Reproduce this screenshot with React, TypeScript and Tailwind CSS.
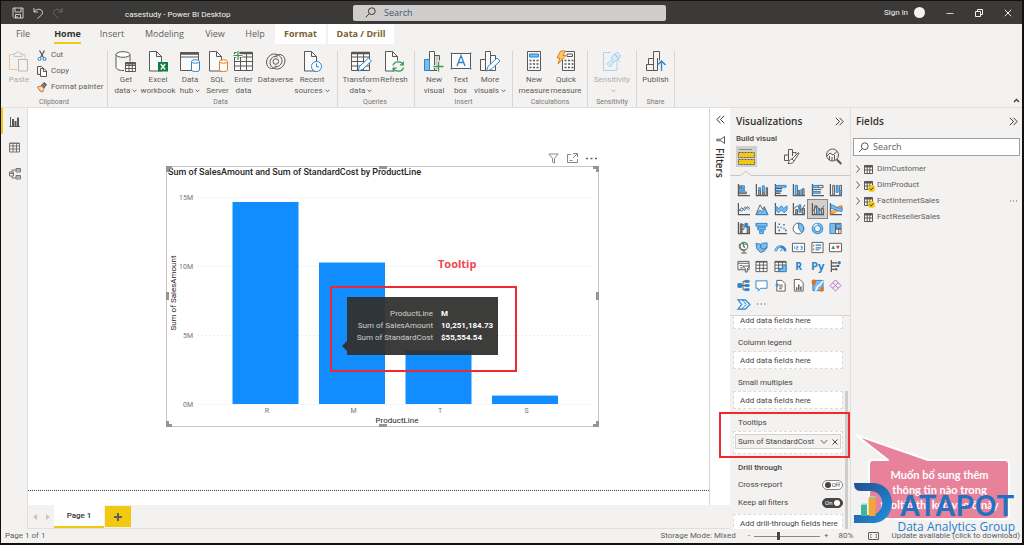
import type { ReactNode } from 'react'

const DARK = '#5a5856'
const BLUE = '#2b84cc'
const SKY = '#7dbdec'

function Svg({ w, h, size, children }: { w: number; h: number; size?: number; children: ReactNode }) {
  return (
    <svg
      width={size ?? w}
      height={size ? (size * h) / w : h}
      viewBox={`0 0 ${w} ${h}`}
      fill="none"
      stroke={DARK}
      strokeWidth="1"
      className="shrink-0 overflow-visible"
      aria-hidden="true"
    >
      {children}
    </svg>
  )
}

/* ---------- shared glyphs ---------- */

function SearchGlyph({ color = DARK }: { color?: string }) {
  return (
    <svg width="11" height="11" viewBox="0 0 11 11" fill="none" stroke={color} strokeWidth="1" aria-hidden="true">
      <circle cx="6.8" cy="4.2" r="3.4" />
      <path d="M4.4 6.6 .8 10.2" />
    </svg>
  )
}

function DoubleChevron({ left = false }: { left?: boolean }) {
  return (
    <svg width="9" height="9" viewBox="0 0 9 9" fill="none" stroke="#3b3a39" strokeWidth="1" aria-hidden="true">
      <path d={left ? 'M4.5.8.8 4.5l3.7 3.7M8.2.8 4.5 4.5l3.7 3.7' : 'm.8.8 3.7 3.7L.8 8.2M4.5.8l3.7 3.7-3.7 3.7'} />
    </svg>
  )
}

function Caret() {
  return (
    <svg width="5" height="4" viewBox="0 0 5 4" fill="none" stroke="currentColor" className="ml-0.5 inline-block" aria-hidden="true">
      <path d="m.6.8 1.900 1.900L4.400.8" />
    </svg>
  )
}

/* ---------- ribbon icons, 22 x 21 ---------- */

const page = 'M3.5 .5h7l5 5v14.500h-12zM10.500 .5v5h5'
const grid = 'M1.500 1.500h18v18h-18zM1.500 6h18M1.500 10.500h18M1.500 15h18M7.500 2v17.500M13.500 2v17.500'

const ribbonIcons: Record<string, ReactNode> = {
  paste: (
    <g stroke="#f0c48f">
      <path d="M5.500 3.500h-4v15h8M13.500 3.500h3.500v4" />
      <path d="M6 5.500v-3h2c0-2.500 4-2.500 4 0h2v3z" stroke="#c8c6c4" />
      <path d="M10.500 8.500h9v11.500h-9z" stroke="#b9b7b5" fill="#f3f2f1" />
    </g>
  ),
  getData: (
    <>
      <path d="M1 3.500v13c0 1.700 3 3 7 3h1M15 3.500v7" fill="#fafafa" />
      <ellipse cx="8" cy="3.500" rx="7" ry="2.800" fill="#fff" />
      <path d="M10.500 11.500h10v9h-10zM10.500 14.500h10M10.500 17.500h10M14 12v8.500M17.300 12v8.500" fill="#fff" />
      <path d="M10.500 12.500h10" strokeWidth="2" />
    </>
  ),
  excel: (
    <>
      <path d={page} fill="#fafafa" transform="translate(-1 0)" />
      <path d="M11 11h10v9.500h-10z" fill="#107c41" stroke="none" />
      <path d="m13.800 13 4.400 5.500m0-5.500-4.400 5.500" stroke="#fff" strokeWidth="1.300" />
    </>
  ),
  hub: (
    <>
      <path d="M1.500 1.500h18v18h-18z" fill="#fafafa" />
      <path d="M1.500 2.500h18" strokeWidth="2.500" />
      <path d="M1.500 6h18" />
      <path d="M12.500 10.500v8.500c0 2 8 2 8 0v-8.500" fill="#fff" stroke={BLUE} />
      <ellipse cx="16.500" cy="10.500" rx="4" ry="1.700" fill="#fff" stroke={BLUE} />
    </>
  ),
  sql: (
    <>
      <path d={page} fill="#fafafa" transform="translate(-1 0)" />
      <path d="M12.500 10.500v8.500c0 2 8 2 8 0v-8.500" fill="#fff" stroke="#e07a1c" />
      <ellipse cx="16.500" cy="10.500" rx="4" ry="1.700" fill="#fff" stroke="#e07a1c" />
    </>
  ),
  enter: (
    <>
      <path d={grid} fill="#fafafa" />
      <path d="M6 2h13.500" strokeWidth="2.500" />
      <path d="M5 0v9M0 4.500h9.500" stroke="#f3f2f1" strokeWidth="3" />
      <path d="M5 0v9M.5 4.500h9" stroke="#3a9a54" strokeWidth="1.200" />
    </>
  ),
  dataverse: (
    <>
      <path d="M13 4C8 1 2 5 1.500 11c0 4 2 6 5 6.500 2.500 0 4-1 5.500-2.500" />
      <path d="M8.500 17c5 3 11-1 11.500-7 0-4-2-6-5-6.500-2.500 0-4 1-5.500 2.500" />
      <path d="M13 4c4 2 5 6 3 9-2 3-5 3-6.500 2M8.500 17C5 15 4 11 6 8c2-3 5-3 6.500-2" />
      <circle cx="10.800" cy="10.500" r="2.800" />
    </>
  ),
  recent: (
    <>
      <path d={page} fill="#fafafa" />
      <circle cx="15.500" cy="15.500" r="5" fill="#fff" stroke={BLUE} />
      <path d="M15.500 12.500v3.300h2.500" stroke={BLUE} />
    </>
  ),
  transform: (
    <>
      <path d={grid} fill="#fafafa" />
      <path d="M1.500 2h18" strokeWidth="2.500" />
      <path d="m8 20 1.500-4.500L18.500 7l3 3-9 8.500z" fill="#fff" stroke={BLUE} />
    </>
  ),
  refresh: (
    <>
      <path d={page} fill="#fafafa" transform="translate(-1 0)" />
      <circle cx="15" cy="15.500" r="6" fill="#f3f2f1" stroke="none" />
      <path d="M10 14.500c1-4.500 8-5 10-1m.3-3v3.300h-3.300M20.500 16.500c-1 4.500-8 5-10 1m-.3 3v-3.300h3.300" stroke="#3a9a54" strokeWidth="1.200" />
    </>
  ),
  newVisual: (
    <>
      <path d="M6.500 .5h5v19h-5zM11.500 4.500h5v15h-5z" fill="#fafafa" />
      <path d="M14 5v14" stroke="#c8c6c4" strokeWidth="3" />
      <path d="M1.500 8.500h5v11h-5z" fill={SKY} stroke={BLUE} />
      <path d="M15.500 9.500v11M9.500 15.500h11" stroke="#f3f2f1" strokeWidth="3" />
      <path d="M15.500 10.500v10M10.500 15.500h10" stroke="#3a9a54" strokeWidth="1.400" />
    </>
  ),
  textBox: (
    <>
      <path d="M1.500 2.500h19v15h-19z" fill="#fafafa" />
      <path d="M1 2h1v1H1zM20 2h1v1h-1zM1 17h1v1H1zM20 17h1v1h-1z" fill={BLUE} stroke={BLUE} />
      <path d="m7 15 4-10.500L15 15M8.300 11.500h5.400" stroke={BLUE} strokeWidth="1.300" />
    </>
  ),
  moreVisuals: (
    <>
      <path d="M1.500 8.500h5v11h-5zM6.500 .5h5v19h-5zM11.500 4.500h5v15h-5z" fill="#fafafa" />
      <path d="m7.500 20 1.500-4.500L18 7l3 3-9 8.500z" fill="#fff" stroke={BLUE} />
    </>
  ),
  measure: (
    <>
      <path d="M4.500 .5h13v19h-13z" fill="#fafafa" />
      <path d="M6.500 3h9v3h-9z" fill={SKY} stroke={BLUE} />
      <path d="M6.500 9.500h9M6.500 13h9M6.500 16.500h9" strokeWidth="1.700" strokeDasharray="2 1.500" />
    </>
  ),
  quick: (
    <>
      <path d="M7.500 .5h12v19h-12z" fill="#fafafa" />
      <path d="M12 3h5.500v2.500H12z" strokeWidth="1" />
      <path d="M9.500 9.500h9M9.500 13h9M9.500 16.500h9" strokeWidth="1.700" strokeDasharray="2 1.500" />
      <path d="M5.500 0h5L8 4.500h3L3 13l2-6H2z" fill="#f7c873" stroke="#e8791c" />
    </>
  ),
  sensitivity: (
    <g stroke="#a9d3ef">
      <path d="M10 1.500H2.500v18h13.500v-8" />
      <path d="m6 13 3 3 4-5-3-2zM10 7l3-4 5 5-3 3zM14 3l2-2 4 4-2 2zM15 8l4 3" fill="#d8ebf7" />
    </g>
  ),
  publish: (
    <>
      <path d="M1.500 13.500h7v6h-7z" />
      <path d="M3.500 13V7.500h5v12M8.500 7.500v-7h6v9M8.500 19.500h4V7" />
      <path d="M16.500 20V10M12.500 14l4-4 4 4" stroke={BLUE} strokeWidth="1.300" />
    </>
  ),
}

type RibbonItem = { icon: string; lines: string[]; width: string; caret?: boolean; disabled?: boolean }
type RibbonGroup = { label: string; pad: string; items: RibbonItem[] }

const RIBBON: RibbonGroup[] = [
  {
    label: 'Data',
    pad: 'pl-0.5 pr-1.5',
    items: [
      { icon: 'getData', lines: ['Get', 'data'], width: 'w-8', caret: true },
      { icon: 'excel', lines: ['Excel', 'workbook'], width: 'w-8' },
      { icon: 'hub', lines: ['Data', 'hub'], width: 'w-8', caret: true },
      { icon: 'sql', lines: ['SQL', 'Server'], width: 'w-[23px]' },
      { icon: 'enter', lines: ['Enter', 'data'], width: 'w-[29px]' },
      { icon: 'dataverse', lines: ['Dataverse'], width: 'w-[35px]' },
      { icon: 'recent', lines: ['Recent', 'sources'], width: 'w-[38px]', caret: true },
    ],
  },
  {
    label: 'Queries',
    pad: 'pl-1 pr-1.5',
    items: [
      { icon: 'transform', lines: ['Transform', 'data'], width: 'w-[38px]', caret: true },
      { icon: 'refresh', lines: ['Refresh'], width: 'w-7' },
    ],
  },
  {
    label: 'Insert',
    pad: 'px-1.5',
    items: [
      { icon: 'newVisual', lines: ['New', 'visual'], width: 'w-[26px]' },
      { icon: 'textBox', lines: ['Text', 'box'], width: 'w-[27px]' },
      { icon: 'moreVisuals', lines: ['More', 'visuals'], width: 'w-8', caret: true },
    ],
  },
  {
    label: 'Calculations',
    pad: 'px-[5px]',
    items: [
      { icon: 'measure', lines: ['New', 'measure'], width: 'w-8' },
      { icon: 'quick', lines: ['Quick', 'measure'], width: 'w-8' },
    ],
  },
  {
    label: 'Sensitivity',
    pad: 'px-1',
    items: [{ icon: 'sensitivity', lines: ['Sensitivity', ''], width: 'w-10', caret: true, disabled: true }],
  },
  { label: 'Share', pad: 'px-0.5', items: [{ icon: 'publish', lines: ['Publish'], width: 'w-[33px]' }] },
]

/* ---------- visual gallery icons, 14 x 14 ---------- */

const axes = <path d="M1.500 0v12.500H14" strokeWidth="1.300" />

const VISUALS: { name: string; icon: ReactNode }[] = [
  { name: 'Stacked bar chart', icon: <>{axes}<path d="M2 2h3v2.500H2zM2 8.500h8v2H2z" fill="#aaa" /><path d="M5 2h3v2.500H5zM2 5.300h6v2H2z" fill={SKY} stroke={BLUE} /></> },
  { name: 'Stacked column chart', icon: <>{axes}<path d="M4 7h2v5H4zM8 9h2v3H8zM12 4h1.500v8H12z" fill="#aaa" /><path d="M4 4h2v3H4zM8 2h2v7H8z" fill={SKY} stroke={BLUE} /></> },
  { name: 'Clustered bar chart', icon: <>{axes}<path d="M2 1.500h11v2H2zM2 7h6v1H2z" fill={SKY} stroke={BLUE} /><path d="M2 5h7M2 10h5" strokeWidth="1.500" /></> },
  { name: 'Clustered column chart', icon: <>{axes}<path d="M3.500 1.500H6V12H3.500z" fill={SKY} stroke={BLUE} /><path d="M6.500 7H8v5H6.500zM11.500 5H13v7h-1.500z" fill="#ddd" /><path d="M9.500 6h1v6h-1z" stroke={BLUE} /></> },
  { name: '100% stacked bar chart', icon: <>{axes}<path d="M2 1.500h6V4H2zM2 8h8v2H2z" fill={SKY} stroke={BLUE} /><path d="M8 1.500h5V4H8M2 6h9" /></> },
  { name: '100% stacked column chart', icon: <>{axes}<path d="M4 1.500h2V12H4zM11.500 1.500h2V12h-2z" fill="#ddd" /><path d="M7.800 1.500h2V9h-2zM11.500 7h2v3h-2z" fill={SKY} stroke={BLUE} /></> },

  { name: 'Line chart', icon: <>{axes}<path d="m2 9 3-4 3 3 3-4 3 2" /><path d="m2 7 3 2 4-5 4 4" stroke={BLUE} /></> },
  { name: 'Area chart', icon: <><path d="M1 12.500 5.500 2 8 7l2-3 4 8.500z" fill="#fff" /><path d="m1 12.500 4-5 3 2 2-4 4 7z" fill={SKY} stroke={BLUE} /></> },
  { name: 'Stacked area chart', icon: <>{axes}<path d="M2 3.500 5 6l3-3 2.500 3L14 3v4.500l-3 3L8 7.500l-3 3L2 8z" fill={SKY} stroke={BLUE} /></> },
  { name: 'Line and stacked column', icon: <>{axes}<path d="M4 7h2v5H4zM11 6h2.500v6H11z" fill="#aaa" /><path d="M7.500 2h2v8h-2z" fill={SKY} stroke={BLUE} /><path d="m2 6 4-3 4 5 4-6" /></> },
  { name: 'Line and clustered column', icon: <>{axes}<path d="M4 3h2v9H4z" fill="#fff" /><path d="M7.500 6h2v6h-2z" fill={SKY} stroke={BLUE} /><path d="M11.500 6h2v6h-2zM2 9l4-6 4 5 4-5" /></> },
  { name: 'Ribbon chart', icon: <>{axes}<path d="M2 9c5 0 5-6 12-6v4C9 7 8 11 2 12z" fill="#f2b56b" stroke="#e0811f" /><path d="M2 2c5 0 6 5 12 3v4C8 9 7 6 2 6z" fill={SKY} stroke={BLUE} /></> },

  { name: 'Waterfall chart', icon: <>{axes}<path d="M3.500 2h2v10h-2zM11 5h2.500v7H11z" fill="#888" /><path d="M5.500 3h2v5h-2z" fill="#fff" /><path d="M8.500 1.500h3v4h-3z" fill={BLUE} stroke={BLUE} /></> },
  { name: 'Funnel', icon: <path d="M1 1.500h12v3H1zM3 5.500h8v3H3zM5 9.500h4v3H5z" fill={SKY} stroke={BLUE} /> },
  { name: 'Scatter chart', icon: <>{axes}<path d="M5 2.500h1.500M5 9h1.500M10 3h1.500M12 9h1.500" strokeWidth="1.700" /><path d="M7 6h1.500M10 7h1.500M3.500 5.500H5" stroke={BLUE} strokeWidth="1.700" /></> },
  { name: 'Pie chart', icon: <><circle cx="7" cy="7" r="5.800" fill="#fff" /><path d="M7 1.200V7l3.600 4.500A5.800 5.800 0 0 0 7 1.200" fill={SKY} stroke={BLUE} /></> },
  { name: 'Donut chart', icon: <><circle cx="7" cy="7" r="4.500" stroke={BLUE} strokeWidth="3.500" /><circle cx="7" cy="7" r="4.500" stroke={SKY} strokeWidth="1.800" /><path d="M7 2.500A4.500 4.500 0 0 0 3 5" stroke="#eee" strokeWidth="1.800" /></> },
  { name: 'Treemap', icon: <><path d="M1 1.500h6v11H1z" fill={SKY} stroke={BLUE} /><path d="M7 1.500h6v6H7zM7 7.500h6v5H7zM10.500 7.500v5" fill="#fff" /><path d="M8 2.500h4v4H8z" stroke={BLUE} fill={SKY} /></> },

  { name: 'Map', icon: <><circle cx="7.500" cy="5.500" r="4.200" fill="#fff" /><path d="M5 3c2-1 3 0 2 1.500s2 1.500 1 3M9 3l1.500 1" stroke="#2f9e58" strokeWidth="1.700" /><path d="M3 3c-2 4 1 8 6 7.500M7.500 10.500v2.500M4.500 13h6" /></> },
  { name: 'Filled map', icon: <><path d="m1 2.500 5 1 2-1 5-.5v5l-3 4-4 1.500-4-4z" fill={SKY} stroke={BLUE} /><path d="M6 4v3l3 2 4-2" stroke="#666" /></> },
  { name: 'Gauge', icon: <><path d="M2 11a5 5 0 0 1 10 0" stroke={BLUE} strokeWidth="3" /><path d="M2 11a5 5 0 0 1 5-5" stroke={SKY} strokeWidth="2" /><path d="m7 11 2-3" /></> },
  { name: 'Card', icon: <><path d="M.5 2.500h13v9H.5z" fill="#fff" /><path d="M3 5v4M5 5.500h1.500V7H5v2h2M9 5.500h2V9H9M9.500 7H11" stroke={BLUE} strokeWidth=".8" /></> },
  { name: 'Multi-row card', icon: <><path d="M1 1.500h12v11H1z" fill="#fff" /><path d="M3 4v2M3 8v2M5 9.500h4" /><path d="M5 4.500h6M5 7.500h6" stroke={BLUE} strokeWidth="1.300" /></> },
  { name: 'KPI', icon: <><path d="M.5 2.500h13v9H.5z" fill="#fff" /><path d="m2.500 8.500 2-4 2 4z" fill="#2f9e58" stroke="none" /><path d="m7.500 5 2 4 2-4z" fill="#d83b3b" stroke="none" /></> },

  { name: 'Slicer', icon: <><path d="M1 1.500h12v9H1z" fill="#fff" /><path d="M1 3.500h12M3 6h3M3 8.500h4" /><path d="M6.500 6.500h7l-2.500 3v3.500h-2V9.500z" fill="#fff" /></> },
  { name: 'Table', icon: <><path d="M1 1.500h12v11H1zM1 5.500h12M1 9h12M5 2v10.500M9 2v10.500" fill="#fff" /><path d="M1 2h12" strokeWidth="1.500" /></> },
  { name: 'Matrix', icon: <><path d="M1 1.500h12v11H1zM1 5.500h12M1 9h12M5 2v10.500M9 2v10.500" fill="#fff" /><path d="M9.500 5.500H13v7H6V9.500h3.500z" fill={SKY} stroke={BLUE} /><path d="M1 2h12" strokeWidth="1.800" /></> },
  { name: 'R script visual', icon: <text x="3.500" y="11" fontSize="11" fontWeight="700" fill={BLUE} stroke="none">R</text> },
  { name: 'Python visual', icon: <text x="0" y="11" fontSize="12" fontWeight="700" fill={BLUE} stroke="none">Py</text> },
  { name: 'Key influencers', icon: <><path d="M2.500 0v13M2.500 3H9M2.500 6.500H8M2.500 10H6" strokeWidth="1.300" /><circle cx="11" cy="3" r="1.800" fill={BLUE} stroke="none" /><path d="M8 6.500h3M6 10h3" strokeWidth="2" /></> },

  { name: 'Decomposition tree', icon: <><path d="M1 5h4v4H1z" fill={BLUE} stroke={BLUE} /><path d="M8.500 1.500H13v2H8.500zM8.500 6H13v2H8.500zM8.500 10.500H13v2H8.500z" fill={BLUE} stroke={BLUE} /><path d="M5 7h3.500M8.500 2.500h-2v9h2" /></> },
  { name: 'Q&A', icon: <path d="M1 2h12v8H6l-2.500 3v-3H1z" fill="#fff" stroke={BLUE} /> },
  { name: 'Narrative', icon: <><path d="M3 1.500h5.500L12 5v8H3z" fill="#fff" /><path d="M5.500 6.500h4M5.500 8.500h4M5.500 10.500h3" /><path d="M3.500 4.500v4M1.500 6.500h4" stroke={BLUE} /></> },
  { name: 'Paginated report', icon: <><path d="M2.500 .5h6L12 4v9H2.500z" fill="#fff" /><path d="M5 12V9M7.300 12V6M9.500 12V8" strokeWidth="1.500" /></> },
  { name: 'ArcGIS map', icon: <><path d="M2 1.500h11v11H2z" fill={SKY} stroke={BLUE} /><path d="m5 13 2-5 3-2 3-4" stroke="#fff" strokeWidth="1.500" /><path d="M1 3a2 2 0 0 1 4 0c0 2-2 4-2 4S1 5 1 3zM11 9h2v4h-3z" fill="#e0711f" stroke="#e0711f" /></> },
  { name: 'Power Apps', icon: <g stroke="#b06fb8"><path d="m7 1 6 6-6 6-6-6z" fill="#f6ebf7" /><path d="m4 4 6 6M10 4l-6 6" /></g> },

  { name: 'Power Automate', icon: <><path d="M1 2h8l5 5-5 5H1l4-5z" fill="#e3f1fb" stroke={BLUE} strokeWidth="1.200" /><path d="m6 2 4 5-5 5" stroke={BLUE} /></> },
  { name: 'More visuals', icon: <path d="M2 6.500h1.500M6 6.500h1.500M10 6.500h1.500" stroke="#666" strokeWidth="1.200" /> },
]

/* ---------- title bar and ribbon ---------- */

function TitleBar() {
  return (
    <header className="grid h-[23px] shrink-0 grid-cols-[352px_minmax(0,1fr)_356px] items-center bg-[#3b3a39] text-[8px] text-[#f3f2f1]">
      <div className="flex items-center gap-2 pl-[11px]">
        <button aria-label="Save">
          <svg width="12" height="12" viewBox="0 0 12 12" fill="none" stroke="#d2d0ce" aria-hidden="true">
            <path d="M1 1h10v10H2.500L1 9.500zM3 1v4h6V1M3.500 11V7.500h5V11M5 9v2" />
          </svg>
        </button>
        <button aria-label="Undo">
          <svg width="12" height="12" viewBox="0 0 12 12" fill="none" stroke="#d2d0ce" aria-hidden="true">
            <path d="M2 1v4h4M2 5c2-3.500 8-4 8.500.5C10.500 8 8 9 5.500 11.500" />
          </svg>
        </button>
        <button aria-label="Redo">
          <svg width="12" height="12" viewBox="0 0 12 12" fill="none" stroke="#6b6967" aria-hidden="true">
            <path d="M10 1v4H6M10 5C8 1.500 2 1 1.500 5.500 1.500 8 4 9 6.500 11.500" />
          </svg>
        </button>
        <span className="ml-[53px] pt-1 whitespace-nowrap">casestudy - Power BI Desktop</span>
      </div>
      <label className="flex h-4 items-center gap-2 rounded-xs bg-[#cfcdcb] px-3">
        <SearchGlyph color="#3b3a39" />
        <input aria-label="Search" placeholder="Search" className="min-w-0 flex-1 bg-transparent font-['Open_Sans',sans-serif] text-[9px] outline-none placeholder:text-[#40587c]" />
      </label>
      <div className="flex items-center justify-end pr-[10px]">
        <button className="whitespace-nowrap">Sign in</button>
        <span className="ml-1.5 size-[11px] rounded-full bg-[#f3f2f1]" />
        <button aria-label="Minimize" className="ml-[21px]">
          <svg width="8" height="8" viewBox="0 0 8 8" stroke="#d2d0ce" aria-hidden="true"><path d="M.5 4.500h7" /></svg>
        </button>
        <button aria-label="Restore" className="ml-[21px]">
          <svg width="8" height="8" viewBox="0 0 8 8" fill="none" stroke="#f3f2f1" aria-hidden="true">
            <path d="M.5 2.500h5v5h-5zM2.500 2V.5h5v5H6" />
          </svg>
        </button>
        <button aria-label="Close" className="ml-[21px]">
          <svg width="8" height="8" viewBox="0 0 8 8" stroke="#f3f2f1" aria-hidden="true"><path d="m.8.8 6.400 6.400M7.200.8.8 7.200" /></svg>
        </button>
      </div>
    </header>
  )
}

function MenuTabs() {
  const tabs = [
    { label: 'File', width: 'w-11' },
    { label: 'Home', width: 'w-[45px]' },
    { label: 'Insert', width: 'w-11' },
    { label: 'Modeling', width: 'w-[61px]' },
    { label: 'View', width: 'w-10' },
    { label: 'Help', width: 'w-10' },
  ]
  return (
    <nav className="flex h-5 shrink-0 font-['Open_Sans',sans-serif] text-[9px] text-[#605e5c]">
      {tabs.map((tab) => (
        <button key={tab.label} className={`${tab.width} flex justify-center`}>
          <span
            className={
              tab.label === 'Home'
                ? 'h-5 border-b-2 border-[#f2c811] leading-[20px] font-bold text-[#323130]'
                : 'leading-[20px]'
            }
          >
            {tab.label}
          </span>
        </button>
      ))}
      <button className="w-[51px] bg-white font-bold text-[#7a6230]">Format</button>
      <button className="ml-0.5 w-[66px] bg-white font-bold whitespace-nowrap text-[#7a6230]">Data / Drill</button>
    </nav>
  )
}

function GroupLabel({ children }: { children: ReactNode }) {
  return <span className="mt-auto text-center text-[7px] leading-[9px] whitespace-nowrap text-[#7a7876]">{children}</span>
}

function Clipboard() {
  return (
    <div className="flex w-[107px] shrink-0 flex-col border-r border-[#d8d6d4]">
      <div className="flex">
        <button className="flex w-[36px] flex-col items-center text-[8px] leading-[11px] text-[#b0aeac]">
          <Svg w={22} h={21}>{ribbonIcons.paste}</Svg>
          <span className="mt-0.5">Paste</span>
        </button>
        <div className="-mt-1 flex flex-col text-[8px]">
          <button className="flex h-4 items-center gap-1">
            <Svg w={10} h={11}>
              <path d="m2.500.5 4 7M7.500.5l-4 7" strokeWidth="1.300" />
              <circle cx="2.500" cy="9" r="1.500" stroke={BLUE} />
              <circle cx="7.500" cy="9" r="1.500" stroke={BLUE} />
            </Svg>
            Cut
          </button>
          <button className="flex h-4 items-center gap-1">
            <Svg w={10} h={11}>
              <path d="M3 8.500H.5v-8h4L6 2" />
              <path d="M3.500 2.500H7L9.500 5v5.500h-6zM6.500 3v2.500h3" fill="#fff" />
            </Svg>
            Copy
          </button>
          <button className="flex h-4 items-center gap-1 whitespace-nowrap">
            <Svg w={10} h={11}>
              <path d="m4 4 3-3.500 2.500 2L7 6z" fill="#777" />
              <path d="m.5 5 4-1L7 6.500 5.500 10 3 9z" fill="#f6dcc0" stroke="#e0711f" />
            </Svg>
            Format painter
          </button>
        </div>
      </div>
      <GroupLabel>Clipboard</GroupLabel>
    </div>
  )
}

function Ribbon() {
  return (
    <section className="flex h-[64px] shrink-0 border-b border-[#e1dfdd] pt-[3px] text-[#605e5c]">
      <div className="flex pt-1">
        <Clipboard />
        {RIBBON.map((group) => (
          <div key={group.label} className={`flex shrink-0 flex-col border-r border-[#d8d6d4] ${group.pad}`}>
            <div className="flex">
              {group.items.map((item) => (
                <button
                  key={item.icon}
                  disabled={item.disabled}
                  className={`${item.width} flex flex-col items-center text-[8px] leading-[11px] whitespace-nowrap ${item.disabled ? 'text-[#b0aeac]' : ''}`}
                >
                  <Svg w={22} h={21}>{ribbonIcons[item.icon]}</Svg>
                  <span className="mt-0.5">{item.lines[0]}</span>
                  {item.lines.length > 1 && (
                    <span>
                      {item.lines[1]}
                      {item.caret && <Caret />}
                    </span>
                  )}
                </button>
              ))}
            </div>
            <GroupLabel>{group.label}</GroupLabel>
          </div>
        ))}
      </div>
      <button aria-label="Collapse ribbon" className="mt-auto mr-0.5 mb-1 ml-auto">
        <svg width="7" height="5" viewBox="0 0 7 5" fill="none" stroke="#3b3a39" strokeWidth="1.300" aria-hidden="true">
          <path d="m1 4 2.500-2.500L6 4" />
        </svg>
      </button>
    </section>
  )
}

/* ---------- report canvas ---------- */

const SALES = [
  { line: 'R', amount: 14.64 },
  { line: 'M', amount: 10.25 },
  { line: 'T', amount: 3.9 },
  { line: 'S', amount: 0.61 },
]
const BASELINE = 238
const PX_PER_MILLION = 13.8

function SalesChart() {
  return (
    <svg width="433" height="261" viewBox="0 0 433 261" className="block font-['Roboto',sans-serif]" role="img" aria-label="Sales by product line">
      <rect x="0.5" y="0.5" width="432" height="260" fill="#fff" stroke="#c8c6c4" />
      <g stroke="#e1dfdd" strokeDasharray="1 3">
        {[0, 5, 10, 15].map((tick) => (
          <path key={tick} d={`M32 ${BASELINE - tick * PX_PER_MILLION + 0.5}h396`} />
        ))}
      </g>
      {SALES.map((sale, i) => (
        <rect
          key={sale.line}
          x={66.500 + i * 86.500}
          y={BASELINE - sale.amount * PX_PER_MILLION}
          width="66"
          height={sale.amount * PX_PER_MILLION}
          fill="#118dff"
        />
      ))}
      <g fontSize="7" fill="#777574">
        {[0, 5, 10, 15].map((tick) => (
          <text key={tick} x="27" y={BASELINE - tick * PX_PER_MILLION + 3} textAnchor="end">{tick}M</text>
        ))}
        {SALES.map((sale, i) => (
          <text key={sale.line} x={101 + i * 86.500} y="247" textAnchor="middle">{sale.line}</text>
        ))}
      </g>
      <g fill="#252423">
        <text x="2" y="9" fontSize="9" fontWeight="500">Sum of SalesAmount and Sum of StandardCost by ProductLine</text>
        <text x="231" y="257" fontSize="8" textAnchor="middle">ProductLine</text>
        <text transform="translate(10 127) rotate(-90)" fontSize="8" textAnchor="middle">Sum of SalesAmount</text>
      </g>
      <path
        d="M1.500 6V1.500H6M213 1.500h8M427 1.500h4.500V6M431.500 126v8M431.500 255v4.500H427M221 259.500h-8M6 259.500H1.500V255M1.500 134v-8"
        fill="none"
        stroke="#979593"
        strokeWidth="3"
      />
    </svg>
  )
}

function ReportCanvas() {
  return (
    <main className="relative min-w-0 flex-1 overflow-hidden bg-white">
      <div className="absolute top-[58px] left-[138px]">
        <SalesChart />
        <div className="absolute -top-[13px] right-0.5 flex gap-2">
          <Svg w={11} h={11}><path d="M.8 1h9.400L6.500 5.300v4.700l-2-1V5.300z" stroke="#8a8886" /></Svg>
          <Svg w={11} h={11}><path d="M4 1.500H.5v8h10V6M6.500.5h4v3.500M10 1 6 5M2.500 7.500h3" stroke="#8a8886" /></Svg>
          <Svg w={11} h={11}><path d="M0 5.500h2M4.500 5.500h2M9 5.500h2" stroke="#605e5c" strokeWidth="1.300" /></Svg>
        </div>
        <span className="absolute top-[91px] left-[272px] font-['Open_Sans',sans-serif] text-[11px] leading-[14px] font-bold text-[#f2464f]">Tooltip</span>
        <div className="absolute top-[131px] left-[181px] h-[58px] w-[151px] bg-[#323130]/95 px-3 py-[11px]">
          <dl className="grid grid-cols-[74px_auto] gap-x-2 text-[8px] leading-[12px] whitespace-nowrap text-[#d2d0ce] [&_dd]:font-bold [&_dd]:text-white [&_dt]:flex [&_dt]:justify-end">
            <dt>ProductLine</dt>
            <dd>M</dd>
            <dt>Sum of SalesAmount</dt>
            <dd>10,251,184.73</dd>
            <dt>Sum of StandardCost</dt>
            <dd>$55,554.54</dd>
          </dl>
          <svg width="5" height="10" viewBox="0 0 5 10" className="absolute top-[44px] -left-[5px]" aria-hidden="true">
            <path d="M5 0v10L0 5z" fill="#323130" />
          </svg>
        </div>
        <div className="absolute top-[120px] left-[164px] h-[86px] w-[187px] border-2 border-[#f0282f]" />
      </div>
      <div className="absolute inset-x-0 bottom-[14px] border-t border-dotted border-[#444]" />
    </main>
  )
}

function ViewRail() {
  return (
    <aside className="flex w-[27px] shrink-0 flex-col border-r border-[#e1dfdd]">
      <button aria-label="Report view" className="flex h-[26px] items-center border-l-2 border-[#f2c811] pl-1.5">
        <Svg w={11} h={11}><path d="M1.500 1v9.500M.5 10.500H11" /><path d="M4 3v7M6.500 5v5M9 1.500V10" strokeWidth="2" /></Svg>
      </button>
      <button aria-label="Data view" className="flex h-[26px] items-center pl-2">
        <Svg w={11} h={11}><path d="M.5 1h10v9H.5zM.5 4h10M.5 7h10M4 1v9M7.500 1v9" stroke="#777574" /><path d="M.5 1.500h10" stroke="#777574" /></Svg>
      </button>
      <button aria-label="Model view" className="flex h-[27px] items-center pl-2">
        <Svg w={12} h={12}><path d="M.5 4h4v4h-4zM7 .5h4.500v3.500H7zM7 7.500h4.500V11H7zM.5 5.500h4M7 2h4.500M7 9h4.500M3 4V2h4M3 8v2h4" stroke="#777574" /></Svg>
      </button>
    </aside>
  )
}

function PageTabs() {
  return (
    <div className="flex h-6 shrink-0 border-b border-[#e1dfdd]">
      <div className="flex w-[26px] items-center justify-around">
        <button aria-label="Previous page"><svg width="4" height="6" viewBox="0 0 4 6" aria-hidden="true"><path d="M4 0v6L0 3z" fill="#c8c6c4" /></svg></button>
        <button aria-label="Next page"><svg width="4" height="6" viewBox="0 0 4 6" aria-hidden="true"><path d="M0 0v6l4-3z" fill="#c8c6c4" /></svg></button>
      </div>
      <button className="w-[50px] border-b-2 border-[#f2c811] bg-white text-[8px] font-medium text-[#323130]">Page 1</button>
      <button aria-label="New page" className="my-px ml-px flex w-[26px] items-center justify-center bg-[#f2c811]">
        <svg width="8" height="8" viewBox="0 0 8 8" stroke="#605e5c" strokeWidth="2" aria-hidden="true"><path d="M4 0v8M0 4h8" /></svg>
      </button>
    </div>
  )
}

function FiltersStrip() {
  return (
    <aside className="flex w-[21px] shrink-0 flex-col items-center border-l border-[#d8d6d4] bg-white pt-[7px]">
      <button aria-label="Expand filters"><DoubleChevron left /></button>
      <span className="mt-3"><Svg w={9} h={8}><path d="M8.500.5v7L5 4.800H.8V3.200H5z" /></Svg></span>
      <span className="mt-1 font-['Open_Sans',sans-serif] text-[10px] leading-[14px] font-semibold text-[#323130] [writing-mode:vertical-rl]">Filters</span>
    </aside>
  )
}

/* ---------- right-hand panes ---------- */

function FieldWell({ label, children }: { label: string; children: ReactNode }) {
  return (
    <div>
      <h4 className="mb-0.5 pl-[5px] leading-[12px]">{label}</h4>
      {children}
    </div>
  )
}

function EmptyWell({ text = 'Add data fields here' }: { text?: string }) {
  return <p className="h-[18px] border border-dashed border-[#dddbd9] bg-white pl-1.5 leading-[17px] whitespace-nowrap">{text}</p>
}

function Toggle({ label, on = false }: { label: string; on?: boolean }) {
  return (
    <label className="flex h-[18px] items-center justify-between pl-[5px]">
      {label}
      <input type="checkbox" defaultChecked={on} className="sr-only" />
      <span
        className={`flex h-[10px] w-[21px] items-center justify-between rounded-full border px-0.5 text-[6px] leading-none ${
          on ? 'flex-row-reverse border-[#484644] bg-[#484644] text-white' : 'border-[#8a8886] bg-white text-[#484644]'
        }`}
      >
        <span className={`size-1.5 rounded-full ${on ? 'bg-white' : 'bg-[#484644]'}`} />
        {on ? 'On' : 'Off'}
      </span>
    </label>
  )
}

function Visualizations() {
  return (
    <aside className="flex w-[121px] shrink-0 flex-col overflow-hidden border-r border-[#e1dfdd] text-[8px] text-[#484644]">
      <div className="flex h-[26px] items-center justify-between pr-1.5 pl-1.5">
        <h2 className="font-['Open_Sans',sans-serif] text-[10px] font-semibold text-[#323130]">Visualizations</h2>
        <button aria-label="Collapse visualizations"><DoubleChevron /></button>
      </div>
      <h3 className="pl-1.5 leading-[10px] font-medium">Build visual</h3>
      <div className="mt-[2px] flex h-[21px] items-center pl-1.5">
        <button aria-label="Build visual" className="flex size-[21px] items-center justify-center bg-[#d2d0ce]">
          <Svg w={17} h={18}>
            <path d="M1 1.500h13" stroke="#8a8886" />
            <path d="M.5 4.500h16v5H.5zM.5 11.500h16v5H.5z" fill="#f2c811" stroke="#605e5c" strokeDasharray="2 1" />
          </Svg>
        </button>
        <button aria-label="Format visual" className="ml-[26px]">
          <Svg w={17} h={17}>
            <path d="M6 12.500H1.500V7h4M5.500 12V1.500h4V8M9.500 4.500h3.500v2" />
            <path d="M15.500 4.500 9 11l2 2 5-7.500zM9 11c-2 0-2.500 2-4 4.500 3.500 0 5.500-.5 6-2.500" fill="#fff" />
          </Svg>
        </button>
        <button aria-label="Analytics" className="ml-[25px]">
          <Svg w={17} h={17}>
            <circle cx="7.500" cy="7" r="6" />
            <path d="m11.800 11.500 4.500 4.500" strokeWidth="2" />
            <path d="m2 8 3-3 3 2 4-3.500M4.500 8v4M7 9v4M9.500 7v5" />
          </Svg>
        </button>
      </div>
      <svg viewBox="0 0 121 6" className="mt-[3px] h-1.5 w-full shrink-0" fill="none" stroke="#c8c6c4" aria-hidden="true">
        <path d="M0 5.500h11l5-4.500 5 4.500h100" />
      </svg>
      <div className="mt-[5px] grid grid-cols-6 gap-y-px pr-[5px] pl-1">
        {VISUALS.map((visual, i) => (
          <button
            key={visual.name}
            aria-label={visual.name}
            className={`flex h-[18px] items-center justify-center font-['Open_Sans',sans-serif] ${i === 10 ? 'bg-[#d2d0ce] outline outline-[#8a8886]' : ''}`}
          >
            <Svg w={14} h={14} size={13}>{visual.icon}</Svg>
          </button>
        ))}
      </div>
      <div className="mt-0.5 flex min-h-0 flex-1 items-stretch border-t border-[#d8d6d4]">
        <div className="flex h-0 min-w-0 flex-1 flex-col gap-2 pl-[3px]">
          <div className="-mt-[5px] [clip-path:inset(5px_0_0_0)]"><EmptyWell /></div>
          <FieldWell label="Column legend"><EmptyWell /></FieldWell>
          <FieldWell label="Small multiples"><EmptyWell /></FieldWell>
          <FieldWell label="Tooltips">
            <div className="border border-dashed border-[#dddbd9] bg-white px-px pt-0.5 pb-1">
              <div className="flex h-[15px] items-center border border-[#d2d0ce] bg-[#f3f2f1] pr-0.5 pl-0.5">
                <span className="whitespace-nowrap">Sum of StandardCost</span>
                <button aria-label="Field options" className="ml-auto">
                  <svg width="8" height="6" viewBox="0 0 8 6" fill="none" stroke="#605e5c" aria-hidden="true"><path d="m.8 1 3.200 3.500L7.200 1" /></svg>
                </button>
                <button aria-label="Remove field" className="ml-1">
                  <svg width="6" height="6" viewBox="0 0 6 6" stroke="#484644" aria-hidden="true"><path d="m.5.5 5 5M5.500.5l-5 5" /></svg>
                </button>
              </div>
            </div>
          </FieldWell>
          <h4 className="pl-[5px] leading-[12px] font-medium">Drill through</h4>
          <div className="-mt-1.5">
            <Toggle label="Cross-report" />
            <Toggle label="Keep all filters" on />
          </div>
          <div className="-mt-1.5"><EmptyWell text="Add drill-through fields here" /></div>
        </div>
        <div className="w-[7px] shrink-0 pt-[75px] pl-0.5">
          <div className="h-full w-[3px] bg-[#cfcdcb]" />
        </div>
      </div>
    </aside>
  )
}

function Fields() {
  const tables = [
    { name: 'DimCustomer', used: false },
    { name: 'DimProduct', used: true },
    { name: 'FactInternetSales', used: true },
    { name: 'FactResellerSales', used: false },
  ]
  return (
    <aside className="w-[171px] shrink-0 text-[8px] text-[#605e5c]">
      <div className="flex h-[26px] items-center justify-between pr-1 pl-[5px]">
        <h2 className="font-['Open_Sans',sans-serif] text-[10px] font-semibold text-[#323130]">Fields</h2>
        <button aria-label="Collapse fields"><DoubleChevron /></button>
      </div>
      <label className="mt-1 mr-0.5 ml-0.5 flex h-[18px] items-center gap-1 border border-[#a19f9d] bg-white px-1">
        <SearchGlyph />
        <input aria-label="Search fields" placeholder="Search" className="min-w-0 flex-1 bg-transparent font-['Open_Sans',sans-serif] text-[9px] outline-none placeholder:text-[#605e5c]" />
      </label>
      <ul className="mt-[5px]">
        {tables.map((table) => (
          <li key={table.name} className="flex h-4 items-center pl-[5px]">
            <svg width="4" height="8" viewBox="0 0 4 8" fill="none" stroke="#605e5c" aria-hidden="true"><path d="m.5.5 3 3.500-3 3.500" /></svg>
            <span className="relative ml-1">
              <Svg w={9} h={9}>
                <path d="M.5.5h8v8h-8z" fill="#fff" />
                <path d="M.5 1.500h8" strokeWidth="2" />
                <path d="M3.200 2v6.500M5.800 2v6.500M.5 5h8" />
              </Svg>
              {table.used && (
                <svg width="7" height="7" viewBox="0 0 7 7" className="absolute top-1 left-1" fill="none" aria-hidden="true">
                  <circle cx="3.500" cy="3.500" r="3.500" fill="#f2c811" />
                  <path d="m1.800 3.600 1.300 1.300 2.200-2.400" stroke="#323130" strokeWidth=".9" />
                </svg>
              )}
            </span>
            <span className="ml-1">{table.name}</span>
            {table.name === 'FactInternetSales' && (
              <button aria-label="More options" className="mr-1 ml-auto">
                <svg width="8" height="2" viewBox="0 0 8 2" stroke="#605e5c" strokeDasharray="1 2" aria-hidden="true"><path d="M0 1h8" /></svg>
              </button>
            )}
          </li>
        ))}
      </ul>
    </aside>
  )
}

function StatusBar() {
  return (
    <footer className="flex h-[14px] shrink-0 items-center pr-0.5 pl-1 text-[8px] leading-[14px] whitespace-nowrap text-[#605e5c]">
      <span>Page 1 of 1</span>
      <span className="ml-auto">Storage Mode: Mixed</span>
      <button aria-label="Zoom out" className="ml-3">-</button>
      <input
        type="range"
        aria-label="Zoom"
        defaultValue={36}
        className="mx-1 h-2 w-[66px] appearance-none bg-[linear-gradient(#8a8886,#8a8886)] bg-[length:100%_1px] bg-center bg-no-repeat [&::-webkit-slider-thumb]:h-2 [&::-webkit-slider-thumb]:w-[3px] [&::-webkit-slider-thumb]:appearance-none [&::-webkit-slider-thumb]:bg-[#484644]"
      />
      <button aria-label="Zoom in">+</button>
      <span className="ml-2.5 w-4">80%</span>
      <button aria-label="Fit to page" className="ml-3.5">
        <svg width="11" height="8" viewBox="0 0 11 8" fill="none" stroke="#605e5c" aria-hidden="true">
          <path d="M.5.5h10v7H.5z" />
          <path d="M2.500 3.500v-1h1M7.500 2.500h1v1M8.500 4.500v1h-1M3.500 5.500h-1v-1" />
        </svg>
      </button>
      <a href="#update" className="ml-3">Update available (click to download)</a>
    </footer>
  )
}

/* ---------- annotations laid over the window ---------- */

function Callout() {
  return (
    <div className="absolute right-[12px] bottom-[22px] h-[89px] w-[157px]">
      <svg width="157" height="89" viewBox="0 0 157 89" className="absolute inset-0 overflow-visible" aria-hidden="true">
        <path d="M3 3 35 28H20q-4 0-4 4v51q0 4 4 4h132q4 0 4-4V32q0-4-4-4H75z" fill="#e8819a" stroke="#fff" strokeWidth="2" strokeLinejoin="round" />
      </svg>
      <p className="relative mt-[35px] ml-4 text-center font-['Lato',sans-serif] text-[11px] leading-[15px] font-bold whitespace-nowrap text-white">
        Muốn bổ sung thêm
        <br />
        thông tin nào trong
        <br />
        tooltip thì kéo vào ô này
      </p>
    </div>
  )
}

function DatapotLogo() {
  return (
    <div className="absolute right-[7px] bottom-[8px] flex h-[52px] w-[161px]">
      <svg width="38" height="41" viewBox="0 0 38 41" className="shrink-0" aria-hidden="true">
        <defs>
          <linearGradient id="dp" x1="0" y1="0" x2="1" y2="1">
            <stop offset="0" stopColor="#234f8e" />
            <stop offset="1" stopColor="#1f93e0" />
          </linearGradient>
        </defs>
        <path d="M0 0h20c24 2 24 38 0 40H0v-8h17c15-1 15-23 0-24H6Q0 8 0 0z" fill="url(#dp)" />
        <path d="M7 22h6v11H7z" fill="#3fb59b" />
        <path d="M14.500 14.500h7V33h-7z" fill="#f0a63a" />
        <path d="M7 22l1.500-1.500h5L13 22M14.500 14.500 16 13h6l-.5 1.500" fill="#8fd8c6" />
      </svg>
      <div className="-ml-0.5 flex flex-1 flex-col items-end justify-end whitespace-nowrap">
        <p className="font-['Inter',sans-serif] text-[29px] leading-[27px] font-semibold text-[#2272c3]">ATAPOT</p>
        <p className="font-['Open_Sans',sans-serif] text-[12px] leading-[16px] text-[#1f7fcb]">Data Analytics Group</p>
      </div>
    </div>
  )
}

export default function App() {
  return (
    <div className="relative flex h-screen flex-col overflow-hidden border-t border-r-2 border-b-2 border-l border-[#111] bg-[#f3f2f1] font-['Roboto','Noto_Sans',sans-serif] text-[#484644]">
      <TitleBar />
      <MenuTabs />
      <Ribbon />
      <div className="flex min-h-0 flex-1">
        <ViewRail />
        <div className="flex min-w-0 flex-1 flex-col">
          <div className="flex min-h-0 flex-1">
            <ReportCanvas />
            <FiltersStrip />
          </div>
          <PageTabs />
        </div>
        <div className="relative flex">
          <Visualizations />
          <Fields />
          <div className="absolute top-[304px] -left-[11px] h-[46px] w-[131px] border-2 border-[#f0282f]" />
        </div>
      </div>
      <StatusBar />
      <Callout />
      <DatapotLogo />
    </div>
  )
}
